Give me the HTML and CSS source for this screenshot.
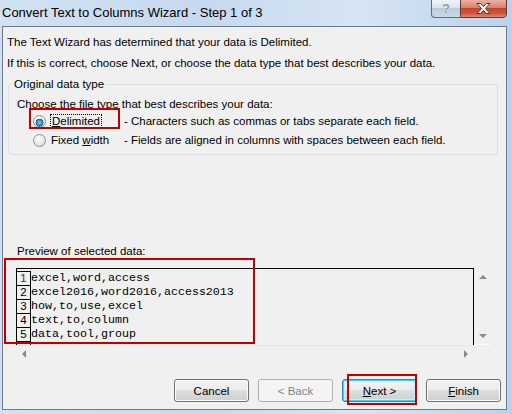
FILE: index.html
```html
<!DOCTYPE html>
<html lang="en">
<head>
    <title>Convert Text to Columns Wizard</title>
    <link rel="stylesheet" href="styles.css">
</head>
<body>
    <div class="window">
        <!-- Title bar -->
        <div class="titlebar">
            <span class="title">Convert Text to Columns Wizard - Step 1 of 3</span>
            <div class="caption-buttons">
                <span class="cap-help">?</span>
                <span class="cap-close">
                    <svg width="15" height="11" viewBox="0 0 15 11">
                        <polygon points="1,0.5 4.5,0.5 7.5,3.6 10.5,0.5 14,0.5 9.4,5.5 14,10.5 10.5,10.5 7.5,7.4 4.5,10.5 1,10.5 5.6,5.5" fill="#fff" stroke="#5a2a20" stroke-width="1"/>
                    </svg>
                </span>
            </div>
        </div>

        <!-- Dialog body -->
        <div class="client">
            <p class="intro">The Text Wizard has determined that your data is Delimited.</p>
            <p class="intro">If this is correct, choose Next, or choose the data type that best describes your data.</p>

            <fieldset class="group">
                <legend>Original data type</legend>
                <p class="choose">Choose the file type that best describes your data:</p>
                <div class="option">
                    <span class="radio checked"></span>
                    <span class="opt-label"><span class="focus"><u>D</u>elimited</span></span>
                    <span class="opt-desc">- Characters such as commas or tabs separate each field.</span>
                </div>
                <div class="option">
                    <span class="radio"></span>
                    <span class="opt-label">Fixed <u>w</u>idth</span>
                    <span class="opt-desc">- Fields are aligned in columns with spaces between each field.</span>
                </div>
            </fieldset>

            <p class="preview-label">Preview of selected data:</p>
            <div class="preview">
                <div class="preview-frame" id="previewRows"></div>
                <div class="vscroll">
                    <span class="arrow arrow-up"></span>
                    <span class="arrow arrow-down"></span>
                </div>
            </div>
            <div class="hscroll">
                <span class="arrow arrow-left"></span>
                <span class="arrow arrow-right"></span>
            </div>

            <div class="buttons">
                <button class="btn">Cancel</button>
                <button class="btn" disabled>&lt; Back</button>
                <button class="btn btn-default"><u>N</u>ext &gt;</button>
                <button class="btn"><u>F</u>inish</button>
            </div>
        </div>

        <!-- Red annotation boxes -->
        <div class="mark mark-delim"></div>
        <div class="mark mark-preview"></div>
        <div class="mark mark-next"></div>
    </div>

    <script>
        // Preview data
        const lines = [
            "excel,word,access",
            "excel2016,word2016,access2013",
            "how,to,use,excel",
            "text,to,column",
            "data,tool,group",
            ""
        ];

        function renderPreview() {
            const frame = document.getElementById('previewRows');
            frame.innerHTML = lines.map((line, i) => `
                <div class="row">
                    <span class="num${i === 0 ? ' first' : ''}">${i < 5 ? i + 1 : ''}</span>
                    <span class="code">${line}</span>
                </div>
            `).join('');
        }

        renderPreview();
    </script>
</body>
</html>
```

FILE: styles.css
```css
* {
    box-sizing: border-box;
}

body {
    margin: 0;
    font-family: "Liberation Sans", Arial, sans-serif;
    font-size: 11.5px;
    color: #000;
}

.window {
    position: relative;
    width: 512px;
    height: 414px;
    display: flex;
    flex-direction: column;
    overflow: hidden;
    background: linear-gradient(90deg, #d2e2f3 0%, #c6d9ee 40%, #d6e5f4 70%, #bcd2ea 100%);
}

/* Title bar */
.titlebar {
    height: 26px;
    display: flex;
    align-items: flex-start;
    padding-left: 2px;
}

.title {
    font-size: 13px;
    line-height: 16px;
    margin-top: 5px;
}

.caption-buttons {
    display: flex;
    margin-left: auto;
    margin-right: 5px;
    margin-top: -1px;
}

.cap-help,
.cap-close {
    height: 19px;
    display: flex;
    align-items: center;
    justify-content: center;
}

.cap-help {
    width: 29px;
    border: 1px solid #5f6d80;
    border-right: none;
    border-radius: 0 0 0 4px;
    background: linear-gradient(#eef3f9, #d9e2ec 45%, #bccadb 50%, #cbd8e6);
    color: #8a96a6;
    font-size: 13px;
    font-weight: bold;
    text-shadow: 0 0 1px #fff, 0 0 2px #fff;
}

.cap-close {
    width: 47px;
    border: 1px solid #5c3a33;
    border-radius: 0 0 4px 0;
    background: linear-gradient(#e9b2a4, #d9836f 45%, #c4412a 50%, #cf5a40 80%, #e08b75);
}

/* Client area */
.client {
    flex: 1;
    margin: 0 5px 4px 2px;
    border: 1px solid #6b7b8e;
    background: #f0f0f0;
    display: flex;
    flex-direction: column;
    padding-top: 7px;
}

.intro {
    margin: 0 0 5px 4px;
    line-height: 16px;
}

.group {
    margin: 0 0 0 5px;
    width: 490px;
    border: 1px solid #d5dfe5;
    border-radius: 3px;
    padding: 0 0 6px 8px;
}

.group legend {
    padding: 0 2px;
    margin-left: -5px;
    line-height: 16px;
}

.choose {
    margin: 4px 0 0 0;
    line-height: 16px;
}

.option {
    display: flex;
    align-items: center;
    height: 16px;
    margin-top: 1px;
}

.option + .option {
    margin-top: 3px;
}

.radio {
    width: 13px;
    height: 13px;
    margin-left: 16px;
    border-radius: 50%;
    border: 1px solid #8f8f8f;
    background: radial-gradient(circle at 40% 35%, #ffffff 0%, #e9e9e9 50%, #cfcfcf 100%);
}

.radio.checked {
    background:
        radial-gradient(circle at 50% 60%, #7fd0f7 0%, #2f8fcc 30%, #0d4e80 45%, transparent 48%),
        radial-gradient(circle at 40% 35%, #ffffff 0%, #ececec 55%, #d0d0d0 100%);
}

.opt-label {
    width: 73px;
    margin-left: 5px;
    flex-shrink: 0;
}

.focus {
    outline: 1px dotted #000;
    padding: 0 1px;
}

/* Preview */
.preview-label {
    margin: 88px 0 0 14px;
    line-height: 16px;
}

.preview {
    display: flex;
    margin: 9px 0 0 13px;
    height: 77px;
}

.preview-frame {
    width: 458px;
    border: 1px solid #000;
    border-bottom: none;
    overflow: hidden;
    padding-top: 2px;
}

.row {
    display: flex;
    height: 14px;
}

.num {
    width: 14px;
    flex-shrink: 0;
    border-top: 1px solid #000;
    border-right: 1px solid #000;
    text-align: center;
    line-height: 13px;
    font-size: 11.5px;
}

.num.first {
    color: #7a1a28;
}

.code {
    font-family: "Liberation Mono", "Courier New", monospace;
    font-size: 11.67px;
    line-height: 14px;
    white-space: pre;
}

.vscroll {
    width: 17px;
    display: flex;
    flex-direction: column;
    justify-content: space-between;
    align-items: center;
    padding: 7px 0 6px 1px;
    border-bottom: 1px solid #fafafa;
}

.hscroll {
    width: 458px;
    height: 16px;
    margin-left: 13px;
    border-top: 1px solid #e2e6ea;
    display: flex;
    justify-content: space-between;
    align-items: center;
    padding: 0 6px 0 6px;
}

.arrow {
    width: 0;
    height: 0;
    border: 4px solid transparent;
}

.arrow-up {
    border-top: none;
    border-bottom-color: #8a8a8a;
    border-bottom-width: 4px;
}

.arrow-down {
    border-bottom: none;
    border-top-color: #8a8a8a;
    border-top-width: 4px;
}

.arrow-left {
    border-left: none;
    border-right-color: #8a8a8a;
    border-right-width: 4px;
}

.arrow-right {
    border-right: none;
    border-left-color: #8a8a8a;
    border-left-width: 4px;
}

/* Buttons */
.buttons {
    display: flex;
    justify-content: flex-end;
    gap: 9px;
    margin-top: auto;
    margin-bottom: 7px;
    padding-right: 5px;
}

.btn {
    width: 75px;
    height: 23px;
    padding: 0;
    font-family: inherit;
    font-size: 11.5px;
    color: #000;
    border: 1px solid #707070;
    border-radius: 3px;
    background: linear-gradient(#f2f2f2 0%, #ebebeb 50%, #dddddd 50%, #cfcfcf 100%);
    box-shadow: inset 0 0 0 1px #fbfbfb;
}

.btn:disabled {
    color: #838383;
    border-color: #adb2b5;
    background: #f4f4f4;
    box-shadow: none;
}

.btn-default {
    border-color: #3c7fb1;
    box-shadow: inset 0 0 0 1px #48d3fb, inset 0 0 0 2px #c5f0fd;
}

/* Annotations */
.mark {
    position: absolute;
    border: 2px solid #c00000;
}

.mark-delim {
    left: 29px;
    top: 108px;
    width: 91px;
    height: 21px;
}

.mark-preview {
    left: 4px;
    top: 258px;
    width: 251px;
    height: 86px;
}

.mark-next {
    left: 347px;
    top: 374px;
    width: 70px;
    height: 31px;
}
```
